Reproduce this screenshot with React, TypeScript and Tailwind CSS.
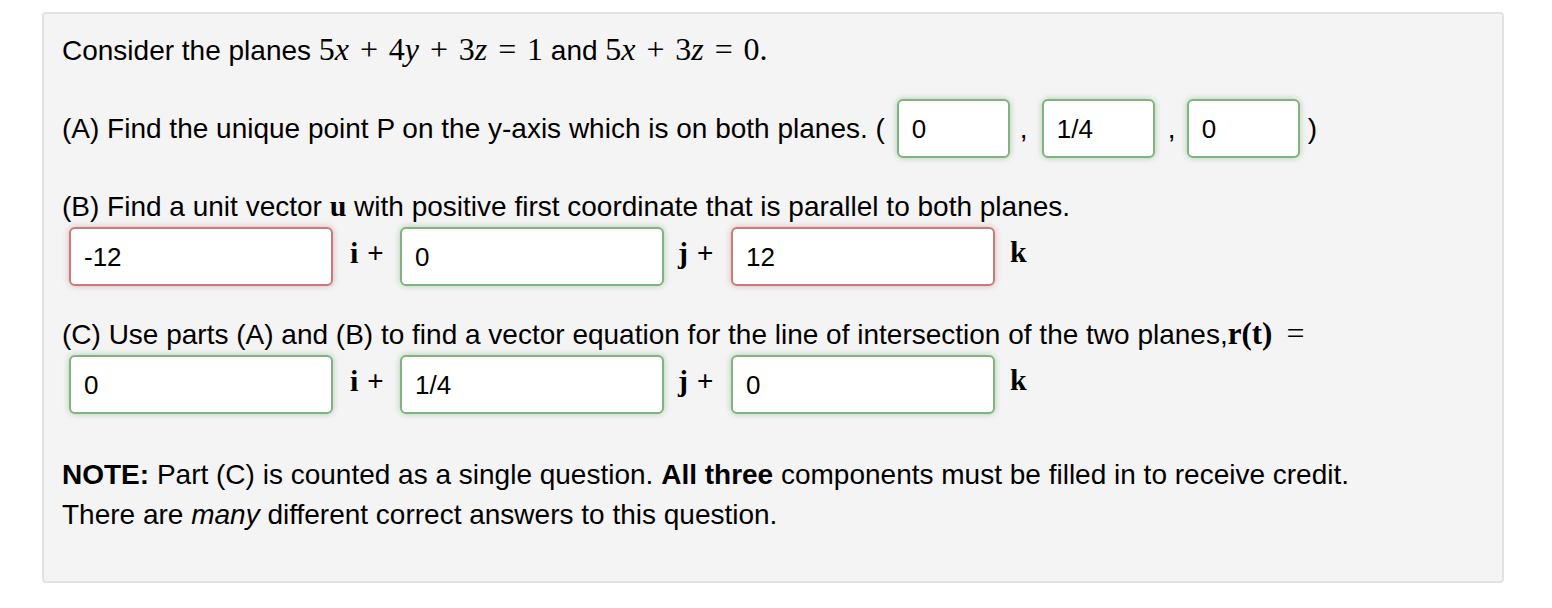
import React from 'react';

const SANS = { fontFamily: '"Liberation Sans", Arial, Helvetica, sans-serif' };

function V({ children }: { children: React.ReactNode }) {
  return <span className="italic">{children}</span>;
}

function Op({ children }: { children: React.ReactNode }) {
  return <span className="mx-[0.34em] not-italic">{children}</span>;
}

function Eq({ terms }: { terms: React.ReactNode }) {
  return (
    <span className="font-['Liberation_Serif',serif] text-[32px] leading-none whitespace-nowrap">{terms}</span>
  );
}

function Box({ value, ok, w }: { value: string; ok: boolean; w: string }) {
  return (
    <div
      className={`${w} h-[59px] shrink-0 rounded-[6px] border-2 bg-white flex items-center pl-[13px] text-[26px] text-black ${
        ok
          ? 'border-[#80b380] shadow-[0_0_6px_rgba(128,179,128,0.6)]'
          : 'border-[#c97b7b] shadow-[0_0_6px_rgba(201,123,123,0.55)]'
      }`}
    >
      {value}
    </div>
  );
}

function Unit({ ch }: { ch: string }) {
  return <span className="font-['Liberation_Serif',serif] font-bold text-[30px] leading-none">{ch}</span>;
}

function VecRow({ vals }: { vals: { v: string; ok: boolean }[] }) {
  return (
    <div className="flex items-center ml-[7px]">
      <Box value={vals[0].v} ok={vals[0].ok} w="w-[264px]" />
      <div className="w-[67px] shrink-0 flex items-center pl-[17px] pb-[8px]">
        <Unit ch="i" />
        <span className="ml-[9px]">+</span>
      </div>
      <Box value={vals[1].v} ok={vals[1].ok} w="w-[264px]" />
      <div className="w-[67px] shrink-0 flex items-center pl-[14px] pb-[8px]">
        <Unit ch="j" />
        <span className="ml-[9px]">+</span>
      </div>
      <Box value={vals[2].v} ok={vals[2].ok} w="w-[264px]" />
      <div className="pl-[15px] pb-[8px]">
        <Unit ch="k" />
      </div>
    </div>
  );
}

export default function App() {
  return (
    <div className="min-h-screen bg-white pt-[12px] pl-[42px]" style={SANS}>
      <div className="w-[1462px] h-[571px] rounded-[4px] border-2 border-[#e2e2e2] bg-[#f4f4f4] px-[18px] pt-[17px] text-[28px] leading-[40px] text-black">
        <p className="h-[40px] whitespace-nowrap">
          Consider the planes{' '}
          <Eq
            terms={
              <>
                5<V>x</V>
                <Op>+</Op>4<V>y</V>
                <Op>+</Op>3<V>z</V>
                <Op>=</Op>1
              </>
            }
          />{' '}
          and{' '}
          <Eq
            terms={
              <>
                5<V>x</V>
                <Op>+</Op>3<V>z</V>
                <Op>=</Op>0.
              </>
            }
          />
        </p>

        <div className="mt-[28px] flex items-center whitespace-nowrap">
          <span>(A) Find the unique point P on the y-axis which is on both planes. (</span>
          <div className="ml-[12px]">
            <Box value="0" ok w="w-[113px]" />
          </div>
          <span className="w-[32px] pl-[10px]">,</span>
          <Box value="1/4" ok w="w-[113px]" />
          <span className="w-[32px] pl-[13px]">,</span>
          <Box value="0" ok w="w-[113px]" />
          <span className="pl-[8px]">)</span>
        </div>

        <p className="mt-[29px] h-[40px] whitespace-nowrap">
          (B) Find a unit vector <Unit ch="u" /> with positive first coordinate that is parallel to both planes.
        </p>
        <VecRow
          vals={[
            { v: '-12', ok: false },
            { v: '0', ok: true },
            { v: '12', ok: false },
          ]}
        />

        <p className="mt-[29px] h-[40px] whitespace-nowrap">
          (C) Use parts (A) and (B) to find a vector equation for the line of intersection of the two planes,
          <span className="font-['Liberation_Serif',serif] font-bold text-[31px] leading-none">r(t)</span>
          <span className="font-['Liberation_Serif',serif] text-[32px] leading-none ml-[14px]">=</span>
        </p>
        <VecRow
          vals={[
            { v: '0', ok: true },
            { v: '1/4', ok: true },
            { v: '0', ok: true },
          ]}
        />

        <p className="mt-[41px] whitespace-nowrap">
          <b>NOTE:</b> Part (C) is counted as a single question. <b>All three</b> components must be filled in to
          receive credit.
        </p>
        <p className="whitespace-nowrap">
          There are <i>many</i> different correct answers to this question.
        </p>
      </div>
    </div>
  );
}
